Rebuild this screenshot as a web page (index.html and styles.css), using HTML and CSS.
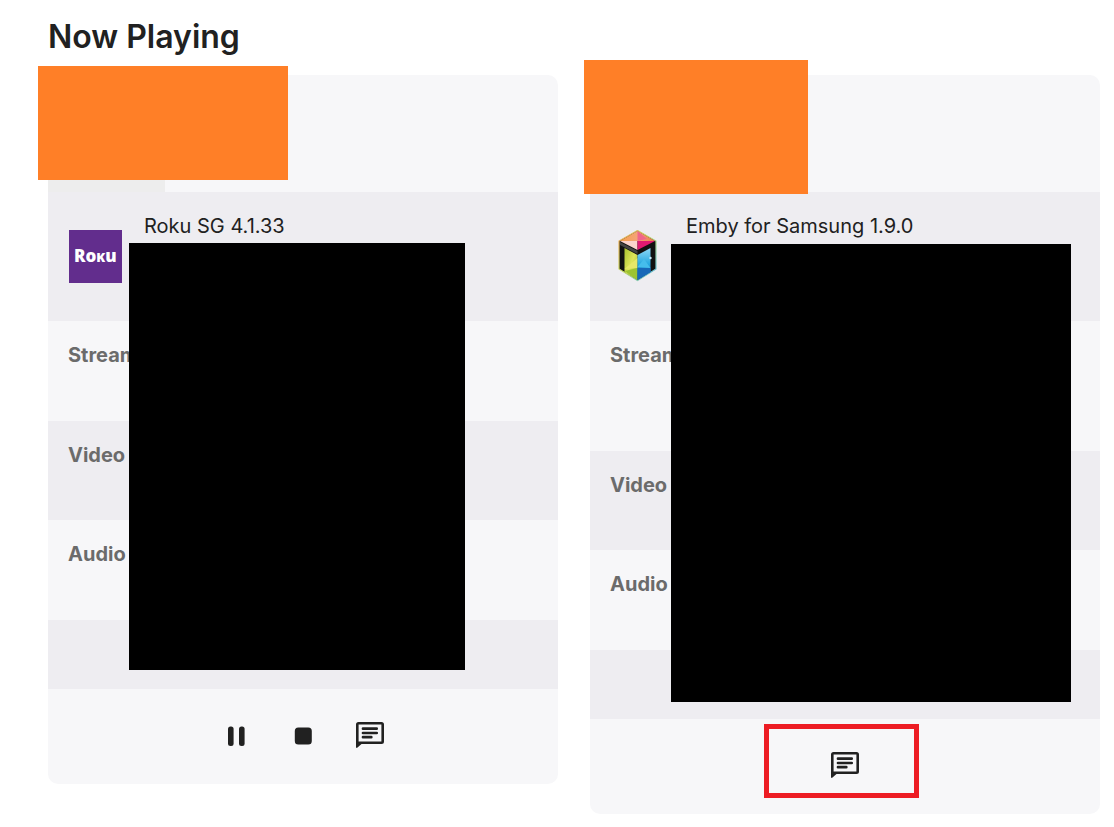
FILE: index.html
```html
<!DOCTYPE html>
<html lang="en">
<head>
  <meta charset="UTF-8">
  <meta name="viewport" content="width=device-width, initial-scale=1.0">
  <title>Now Playing</title>
  <link rel="stylesheet" href="styles.css">
</head>
<body>
  <!-- Shared icons -->
  <svg class="icon-defs" aria-hidden="true">
    <symbol id="icon-message" viewBox="0 0 34 34">
      <path d="M3 28.3V5.5Q3 3 5.5 3H28.500Q31 3 31 5.500V22.500Q31 25 28.500 25H8.500L4.500 28.600Q3.500 29.300 3 28.300ZM5.600 5.600V22.400H28.400V5.600Z" fill-rule="evenodd" fill="currentColor"/>
      <path d="M10 9.700H23.700M10 14H23.700M10 18.200H18.300" fill="none" stroke="currentColor" stroke-width="2.700" stroke-linecap="round"/>
    </symbol>
  </svg>

  <main>
    <h1>Now Playing</h1>

    <div class="sessions">
      <article class="card">
        <div class="card-header">
          <div class="thumb"></div>
        </div>
        <div class="row device">
          <svg class="device-icon" viewBox="0 1 54 54" role="img" aria-label="Roku">
            <rect x="1" y="1" width="53" height="53" fill="#622d8d"/>
            <text class="roku-text" x="6" y="33">Ro<tspan class="roku-small">K</tspan>u</text>
          </svg>
          <span>Roku SG 4.1.33</span>
        </div>
        <div class="row stream"><h2>Stream</h2></div>
        <div class="row striped"><h2>Video</h2></div>
        <div class="row"><h2>Audio</h2></div>
        <div class="user"></div>
        <div class="controls">
          <button type="button" aria-label="Pause">
            <svg viewBox="0 0 34 34">
              <rect x="9" y="7.500" width="5.600" height="19.500" rx="2.500" fill="currentColor"/>
              <rect x="20" y="7.500" width="5.600" height="19.500" rx="2.500" fill="currentColor"/>
            </svg>
          </button>
          <button type="button" aria-label="Stop">
            <svg viewBox="0 0 34 34">
              <rect x="8.800" y="8.500" width="17" height="17" rx="3.500" fill="currentColor"/>
            </svg>
          </button>
          <button type="button" aria-label="Send message">
            <svg><use href="#icon-message"/></svg>
          </button>
        </div>
        <div class="cover cover-title"></div>
        <div class="cover cover-details"></div>
      </article>

      <article class="card card-samsung">
        <div class="card-header">
          <div class="thumb"></div>
        </div>
        <div class="row device">
          <svg class="device-icon" viewBox="0 1 54 54" role="img" aria-label="Samsung">
            <defs>
              <linearGradient id="green" x1="0" y1="0" x2="1" y2="1">
                <stop offset="0" stop-color="#a9c32f"/>
                <stop offset="0.5" stop-color="#dfe55a"/>
                <stop offset="1" stop-color="#8fb82a"/>
              </linearGradient>
              <linearGradient id="blue" x1="0" y1="0" x2="0" y2="1">
                <stop offset="0" stop-color="#8ed8f5"/>
                <stop offset="0.5" stop-color="#27a9e1"/>
                <stop offset="1" stop-color="#1254a4"/>
              </linearGradient>
              <linearGradient id="top" x1="0" y1="0" x2="1" y2="0">
                <stop offset="0" stop-color="#f6a04a"/>
                <stop offset="0.5" stop-color="#f4a478"/>
                <stop offset="1" stop-color="#ea7a4c"/>
              </linearGradient>
              <linearGradient id="edge" x1="0" y1="0" x2="1" y2="1">
                <stop offset="0" stop-color="#f7a655"/>
                <stop offset="0.45" stop-color="#c4dc62"/>
                <stop offset="1" stop-color="#53b9ef"/>
              </linearGradient>
            </defs>
            <path d="M27.500 1.500L46 12V40L27.500 51.500L9 40V12Z" fill="#111" stroke="url(#edge)" stroke-width="1.200"/>
            <path d="M27.500 2L45 12H10Z" fill="url(#top)"/>
            <path d="M27.500 2V12L37 10Z" fill="#f0658a"/>
            <path d="M10 12H27.500V21Z" fill="#fbd3cc"/>
            <path d="M27.500 12H45L27.500 21Z" fill="#df1970"/>
            <path d="M10 13L27.500 22V25L10 16Z" fill="#777" opacity=".5"/>
            <path d="M14.500 19L27.500 26V51L14.500 43Z" fill="url(#green)"/>
            <path d="M14.500 40L27.500 29V39Z" fill="#e6e868"/>
            <path d="M14.500 42L27.500 39V51Z" fill="#9cc331"/>
            <path d="M27.500 26L40.500 19V43L27.500 51Z" fill="url(#blue)"/>
            <path d="M27.500 38L34 30L40.500 39Z" fill="#45bdec"/>
            <path d="M27.500 39H40.500V43L27.500 51Z" fill="#1768b8"/>
            <circle cx="40.500" cy="29" r="1.200" fill="#c9efff"/>
          </svg>
          <span>Emby for Samsung 1.9.0</span>
        </div>
        <div class="row stream"><h2>Stream</h2></div>
        <div class="row striped"><h2>Video</h2></div>
        <div class="row"><h2>Audio</h2></div>
        <div class="user"></div>
        <div class="controls">
          <button type="button" aria-label="Send message">
            <svg><use href="#icon-message"/></svg>
          </button>
          <div class="highlight"></div>
        </div>
        <div class="cover cover-title"></div>
        <div class="cover cover-details"></div>
      </article>
    </div>
  </main>
</body>
</html>
```
FILE: styles.css
```css
/* Base Styles */
* {
  box-sizing: border-box;
}

body {
  margin: 0;
  background: #fff;
  color: #212121;
  font-family: Inter, "Liberation Sans", sans-serif;
  font-size: 20px;
  line-height: 28px;
}

main {
  padding: 16px 14px 12px 48px;
}

h1 {
  margin: 0 0 17px;
  font-size: 32px;
  line-height: 42px;
  font-weight: 600;
}

.icon-defs {
  display: none;
}

/* Session cards */
.sessions {
  display: grid;
  grid-template-columns: 1fr 1fr;
  gap: 32px;
  align-items: start;
}

.card {
  position: relative;
  background: #f7f7f9;
  border-radius: 10px;
}

.card-header {
  height: 117px;
}

.thumb {
  width: 117px;
  height: 117px;
  background: #ededed;
  border-top-left-radius: 10px;
}

.row {
  min-height: 100px;
  padding: 20px;
}

.row h2 {
  margin: 0;
  font-size: 20px;
  line-height: 28px;
  font-weight: 700;
  color: #6b6b6b;
}

.striped,
.device,
.user {
  background: #eeedf1;
}

.striped {
  min-height: 99px;
}

.device {
  display: flex;
  gap: 22px;
  min-height: 129px;
}

.device-icon {
  width: 54px;
  height: 54px;
  align-self: center;
}

.roku-text {
  font-family: "Open Sans", sans-serif;
  font-size: 17px;
  font-weight: 800;
  fill: #fff;
}

.roku-small {
  font-size: 13px;
}

.card-samsung .stream {
  min-height: 130px;
}

.user {
  height: 69px;
}

/* Playback buttons */
.controls {
  position: relative;
  display: flex;
  justify-content: center;
  align-items: center;
  height: 95px;
  padding-bottom: 2px;
}

.controls button {
  display: flex;
  justify-content: center;
  width: 67px;
  padding: 0;
  border: none;
  background: none;
  color: #212121;
  cursor: pointer;
}

.controls svg {
  width: 34px;
  height: 34px;
}

.highlight {
  position: absolute;
  top: 5px;
  left: 174px;
  width: 155px;
  height: 74px;
  border: 5px solid #ed1c24;
  pointer-events: none;
}

/* Blocks that hide private details */
.cover {
  position: absolute;
}

.cover-title {
  top: -9px;
  left: -10px;
  width: 250px;
  height: 114px;
  background: #ff7f27;
}

.cover-details {
  top: 168px;
  left: 81px;
  width: 336px;
  height: 427px;
  background: #000;
}

.card-samsung .cover-title {
  top: -15px;
  left: -6px;
  width: 224px;
  height: 134px;
}

.card-samsung .cover-details {
  top: 169px;
  width: 400px;
  height: 458px;
}

@media (max-width: 768px) {
  .sessions {
    grid-template-columns: 1fr;
  }
}
```
